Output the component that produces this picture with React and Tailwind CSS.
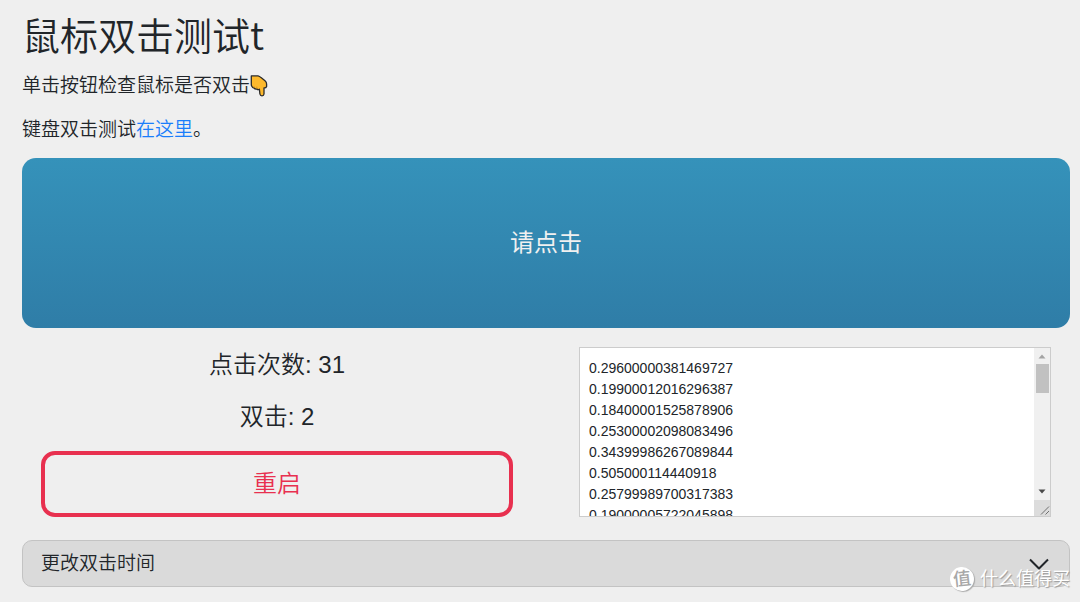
import { useState } from "react";

const FIRST_INTERVALS = [
  "0.29600000381469727",
  "0.19900012016296387",
  "0.18400001525878906",
  "0.25300002098083496",
  "0.34399986267089844",
  "0.505000114440918",
  "0.25799989700317383",
  "0.19000005722045898",
];

const INTERVALS = Array.from({ length: 31 }, (_, i) => FIRST_INTERVALS[i % FIRST_INTERVALS.length]);

function PointingDown() {
  return (
    <svg viewBox="0 0 18 24" className="inline-block h-6 w-[18px] align-middle" role="img" aria-label="👇">
      <path
        d="M1.3 0.9 H8 Q9.6 1.2 11 2.6 L15 5.8 Q16.6 7.2 16.6 9 V11.4 Q16 13 14 12.8 V19 Q13.8 20.8 12 20.8 Q10.2 20.8 9.9 19 L9.4 14.2 Q8 15.2 6.8 14 Q5 14.4 4 13 Q2.4 13 1.9 11.4 Q1.3 10.6 1.3 9.6 Z"
        fill="#fdb92c"
        stroke="#2b2b2b"
        strokeWidth="1.3"
        strokeLinejoin="round"
      />
      <path d="M4 11 V13 M6.8 11.6 V14" fill="none" stroke="#c98c1c" strokeWidth="0.7" />
    </svg>
  );
}

function ScrollBar() {
  return (
    <div aria-hidden="true" className="absolute inset-y-px right-px flex w-4 flex-col bg-[#f0f0f0]">
      <svg viewBox="0 0 16 16" className="h-4 w-4">
        <path d="M4.5 10.5 L8 6.5 L11.5 10.5 Z" fill="#a3a3a3" />
      </svg>
      <div className="mr-px ml-0.5 h-[29px] bg-[#c1c1c1]" />
      <div className="grow" />
      <svg viewBox="0 0 16 16" className="h-4 w-4">
        <path d="M4.5 5.5 L8 9.5 L11.5 5.5 Z" fill="#4a4a4a" />
      </svg>
      <svg viewBox="0 0 16 16" className="h-4 w-4 bg-[#dcdcdc]">
        <path d="M7 14.5 L15 6.5 M11.5 14.5 L15 11" fill="none" stroke="#707070" strokeWidth="1" />
      </svg>
    </div>
  );
}

function Watermark() {
  return (
    <div className="absolute right-[10px] bottom-[11px] flex items-center gap-[6px] text-white">
      <span className="flex size-6 -rotate-6 items-center justify-center rounded-full bg-white text-lg leading-none font-medium text-[#a8a8a8] shadow-[1px_1px_1px_#aaaaaa]">
        值
      </span>
      <span className="text-lg leading-6 [text-shadow:1px_1px_1px_#999999]">什么值得买</span>
    </div>
  );
}

export default function App() {
  const [clicks, setClicks] = useState(31);
  const [doubles, setDoubles] = useState(2);
  const [open, setOpen] = useState(false);

  const restart = () => {
    setClicks(0);
    setDoubles(0);
  };

  return (
    <main className="relative min-h-screen bg-[#efefef] pt-3 pr-[10px] pb-[15px] pl-[22px] font-['Liberation_Sans','Noto_Sans_CJK_SC',sans-serif] text-[19px] leading-7 text-[#212529]">
      <h1 className="mb-4 font-['Noto_Sans_CJK_SC',sans-serif] text-[38px] leading-11 font-[350]">鼠标双击测试t</h1>
      <p className="mb-4 font-[350]">
        单击按钮检查鼠标是否双击
        <PointingDown />
      </p>
      <p className="mb-[14px] font-[350]">
        键盘双击测试
        <a href="#keyboard" className="text-[#1a7efb]">
          在这里
        </a>
        。
      </p>
      <button
        type="button"
        onClick={() => setClicks(clicks + 1)}
        onDoubleClick={() => setDoubles(doubles + 1)}
        className="block h-[170px] w-full rounded-[14px] bg-linear-to-b from-[#3592ba] to-[#2f7da7] text-2xl font-normal text-[#f0f0f0]"
      >
        请点击
      </button>

      <section className="mt-[19px] grid grid-cols-2 gap-[66px] px-[19px]">
        <div className="text-center text-2xl leading-9 font-[350]">
          <p className="mb-4">点击次数: {clicks}</p>
          <p className="mb-4">双击: {doubles}</p>
          <button
            type="button"
            onClick={restart}
            className="block h-[66px] w-full rounded-[14px] border-4 border-[#e8304f] text-[#e8304f]"
          >
            重启
          </button>
        </div>
        <div className="relative h-[170px]">
          <textarea
            readOnly
            aria-label="点击间隔"
            defaultValue={INTERVALS.join("\n")}
            className="block h-full w-full resize-none border border-[#cccccc] bg-white px-[9px] py-[10px] text-sm leading-[21px] text-[#212529] [scrollbar-width:none]"
          />
          <ScrollBar />
        </div>
      </section>

      <button
        type="button"
        aria-expanded={open}
        onClick={() => setOpen(!open)}
        className="mt-[23px] flex h-[47px] w-full items-center justify-between rounded-[10px] border border-[#c3c3c3] bg-[#dadada] pr-5 pl-[18px] text-left font-[350]"
      >
        更改双击时间
        <svg viewBox="0 0 20 12" className="h-3 w-5" fill="none" stroke="#212529" strokeWidth="2">
          <path d="M1 1.5 L10 10.5 L19 1.5" />
        </svg>
      </button>
      <Watermark />
    </main>
  );
}
